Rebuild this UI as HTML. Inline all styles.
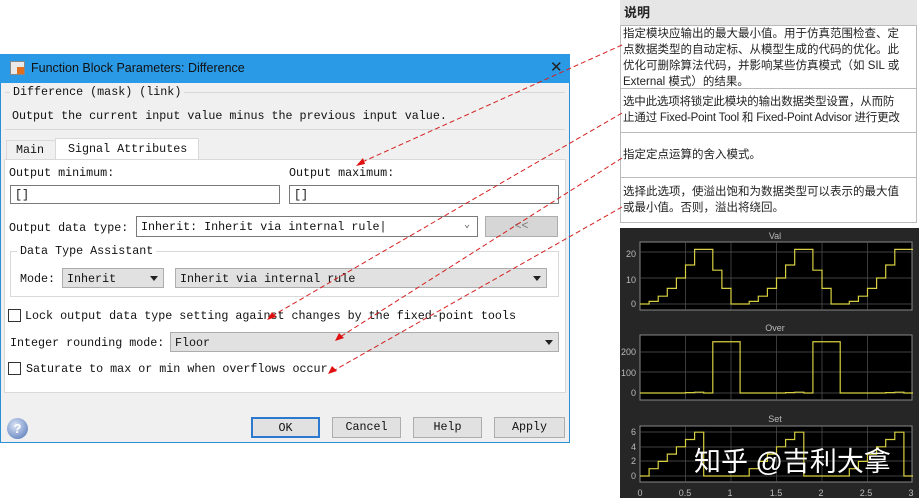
<!DOCTYPE html>
<html><head><meta charset="utf-8"><style>
*{margin:0;padding:0;box-sizing:border-box}
body{width:919px;height:498px;background:#fff;position:relative;overflow:hidden;font-family:"Liberation Mono",monospace;font-size:11.7px;color:#111}
.a{position:absolute;white-space:nowrap}
.box{position:absolute;border:1px solid #7a7a7a;background:#fff}
.cb{position:absolute;border:1px solid #adadad;background:#e1e1e1}
.chk{position:absolute;width:13px;height:13px;border:1px solid #333;background:#fff}
.btn{position:absolute;border:1px solid #adadad;background:#e1e1e1;text-align:center;line-height:19px}
.zh{font-family:"Liberation Sans","Noto Sans CJK SC",sans-serif;font-size:11.5px;line-height:16px;color:#222}
.tri{position:absolute;width:0;height:0;border-left:4px solid transparent;border-right:4px solid transparent;border-top:5px solid #222}
</style></head><body>
<!-- dialog -->
<div class="a" style="left:0;top:54px;width:570px;height:389px;background:#f0f0f0;border:1px solid #2b8fd6"></div>
<div class="a" style="left:0;top:54px;width:570px;height:29px;background:#2b9ae6"></div>
<div class="a" style="left:10px;top:61px;width:15px;height:14px;background:#e9e9e9;border:1px solid #888"></div>
<div class="a" style="left:17px;top:67px;width:7px;height:7px;background:#e07020"></div>
<div class="a" style="left:31px;top:61px;font-family:'Liberation Sans',sans-serif;font-size:12.5px;color:#111">Function Block Parameters: Difference</div>
<div class="a" style="left:550px;top:58px;font-family:'Liberation Sans',sans-serif;font-size:15px;color:#222">✕</div>
<div class="a" style="left:5px;top:92px;width:560px;height:38px;border-top:1px solid #d8d8d8;border-bottom:1px solid #d8d8d8"></div>
<div class="a" style="left:10px;top:85px;background:#f0f0f0;padding:0 3px">Difference (mask) (link)</div>
<div class="a" style="left:12px;top:109px">Output the current input value minus the previous input value.</div>
<!-- tabs -->
<div class="a" style="left:6px;top:140px;width:50px;height:19px;border:1px solid #d9d9d9;border-bottom:none;background:#f0f0f0;padding:2px 9px">Main</div>
<div class="a" style="left:55px;top:138px;width:144px;height:22px;border:1px solid #d9d9d9;border-bottom:none;background:#fff;padding:3px 12px">Signal Attributes</div>
<div class="a" style="left:4px;top:159px;width:562px;height:234px;background:#fff;border:1px solid #d9d9d9"></div>
<div class="a" style="left:9px;top:166px">Output minimum:</div>
<div class="a" style="left:289px;top:166px">Output maximum:</div>
<div class="box" style="left:10px;top:185px;width:270px;height:19px;padding:2px 4px">[]</div>
<div class="box" style="left:289px;top:185px;width:270px;height:19px;padding:2px 4px">[]</div>
<div class="a" style="left:9px;top:221px">Output data type:</div>
<div class="box" style="left:136px;top:216px;width:342px;height:21px;padding:3px 4px">Inherit: Inherit via internal rule|</div>
<div class="a" style="left:464px;top:219px;font-size:10px;color:#555">⌄</div>
<div class="btn" style="left:485px;top:216px;width:73px;height:21px;background:#d6d6d6;color:#777">&lt;&lt;</div>
<div class="a" style="left:10px;top:251px;width:549px;height:46px;border:1px solid #d9d9d9"></div>
<div class="a" style="left:17px;top:244px;background:#fff;padding:0 3px">Data Type Assistant</div>
<div class="a" style="left:20px;top:272px">Mode:</div>
<div class="cb" style="left:62px;top:268px;width:102px;height:20px;padding:3px 4px">Inherit</div>
<div class="tri" style="left:150px;top:276px"></div>
<div class="cb" style="left:175px;top:268px;width:372px;height:20px;padding:3px 4px">Inherit via internal rule</div>
<div class="tri" style="left:533px;top:276px"></div>
<div class="chk" style="left:8px;top:309px"></div>
<div class="a" style="left:25px;top:309px">Lock output data type setting against changes by the fixed-point tools</div>
<div class="a" style="left:10px;top:336px">Integer rounding mode:</div>
<div class="cb" style="left:170px;top:332px;width:389px;height:20px;padding:3px 4px">Floor</div>
<div class="tri" style="left:545px;top:340px"></div>
<div class="chk" style="left:8px;top:362px"></div>
<div class="a" style="left:26px;top:362px">Saturate to max or min when overflows occur</div>
<div class="a" style="left:7px;top:418px;width:21px;height:21px;border-radius:50%;background:radial-gradient(circle at 40% 35%,#dbe4f5,#4a6fb5);color:#fff;font-family:'Liberation Sans';font-weight:bold;font-size:13px;text-align:center;line-height:21px">?</div>
<div class="btn" style="left:251px;top:417px;width:69px;height:21px;border:2px solid #2b7ad0">OK</div>
<div class="btn" style="left:332px;top:417px;width:69px;height:21px">Cancel</div>
<div class="btn" style="left:413px;top:417px;width:69px;height:21px">Help</div>
<div class="btn" style="left:494px;top:417px;width:71px;height:21px">Apply</div>

<!-- right panel -->
<div class="a" style="left:620px;top:0;width:297px;height:223px;border:1px solid #bbb;border-top:none"></div>
<div class="a zh" style="left:620px;top:0;width:297px;height:26px;background:#e6e6e6;border-bottom:1px solid #bbb;font-weight:bold;padding:5px 4px;font-size:13px">说明</div>
<div class="a zh" style="left:623px;top:26px">指定模块应输出的最大最小值。用于仿真范围检查、定<br>点数据类型的自动定标、从模型生成的代码的优化。此<br>优化可删除算法代码，并影响某些仿真模式（如 SIL 或<br>External 模式）的结果。</div>
<div class="a" style="left:620px;top:88px;width:297px;border-top:1px solid #bbb"></div>
<div class="a zh" style="left:623px;top:94px;letter-spacing:-0.2px">选中此选项将锁定此模块的输出数据类型设置，从而防<br>止通过 Fixed-Point Tool 和 Fixed-Point Advisor 进行更改</div>
<div class="a" style="left:620px;top:132px;width:297px;border-top:1px solid #bbb"></div>
<div class="a zh" style="left:623px;top:147px">指定定点运算的舍入模式。</div>
<div class="a" style="left:620px;top:177px;width:297px;border-top:1px solid #bbb"></div>
<div class="a zh" style="left:623px;top:184px">选择此选项，使溢出饱和为数据类型可以表示的最大值<br>或最小值。否则，溢出将绕回。</div>

<!-- scope -->
<svg class="a" style="left:0;top:0" width="919" height="498" id="sv">
<rect x="620" y="228" width="299" height="270" fill="#262626"/>
<g font-family="Liberation Sans" font-size="9" fill="#bbb" text-anchor="middle">
<text x="775" y="239">Val</text><text x="775" y="331">Over</text><text x="775" y="422">Set</text>
<text x="640" y="496">0</text><text x="685" y="496">0.5</text><text x="730" y="496">1</text><text x="776" y="496">1.5</text><text x="821" y="496">2</text><text x="866" y="496">2.5</text><text x="911" y="496">3</text>
<g text-anchor="end"><text x="636" y="257">20</text><text x="636" y="283">10</text><text x="636" y="307">0</text>
<text x="636" y="355">200</text><text x="636" y="376">100</text><text x="636" y="396">0</text>
<text x="636" y="435">6</text><text x="636" y="450">4</text><text x="636" y="464">2</text><text x="636" y="479">0</text></g>
</g>
<g id="plots"></g>
<text x="694" y="471" font-family="Liberation Sans,Noto Sans CJK SC,sans-serif" font-size="27" fill="#fff">知乎 @吉利大拿</text>
</svg>
<!-- arrows -->
<svg class="a" style="left:0;top:0" width="919" height="498">
<g stroke="#d42020" stroke-width="1" stroke-dasharray="5,3" fill="none">
<line x1="622" y1="45" x2="360" y2="163"/>
<line x1="622" y1="113" x2="272" y2="316"/>
<line x1="622" y1="158" x2="340" y2="337"/>
<line x1="622" y1="207" x2="333" y2="371"/>
</g>
<g fill="#e01010">
<polygon points="356,166 363,158 365,164"/>
<polygon points="267,320 272,312 276,317"/>
<polygon points="335,341 339,333 344,338"/>
<polygon points="328,374 332,366 337,371"/>
</g>
</svg>
<script>
var g=document.getElementById('plots'),s='';
function X(t){return 640+t*91;}
var P=[{y0:242,y1:310,f:function(v){return 304-v*2.6},d:[0,1,3,6,10,15,21,21,13,6,0],xs:[0.5,1,1.5,2,2.5],ys:[252,278,304]},
{y0:335,y1:400,f:function(v){return 393-v*0.205},d:[0,0,0,0,0,2,4,0,250,250,250],xs:[0.5,1,1.5,2,2.5],ys:[352,372,393]},
{y0:426,y1:482,f:function(v){return 476-v*7.3},d:[0,1,2,3,4,5,6,0,0,0,0],xs:[0.5,1,1.5,2,2.5],ys:[432,447,461,476]}];
P.forEach(function(p){
s+='<rect x="640" y="'+p.y0+'" width="272" height="'+(p.y1-p.y0)+'" fill="#000" stroke="#888"/>';
p.xs.forEach(function(t){s+='<line x1="'+X(t)+'" x2="'+X(t)+'" y1="'+p.y0+'" y2="'+p.y1+'" stroke="#555" stroke-width="0.7"/>';});
p.ys.forEach(function(y){s+='<line x1="640" x2="912" y1="'+y+'" y2="'+y+'" stroke="#555" stroke-width="0.7"/>';});
var d='M640 '+p.f(p.d[0]);
for(var i=0;i<30;i++){var v=p.d[i%11];var y=p.f(v);d+=' V'+y+' H'+X((i+1)*0.1);}
s+='<path d="'+d+'" stroke="#d8d040" stroke-width="1.2" fill="none"/>';
});
g.innerHTML=s;
</script>
</body></html>
